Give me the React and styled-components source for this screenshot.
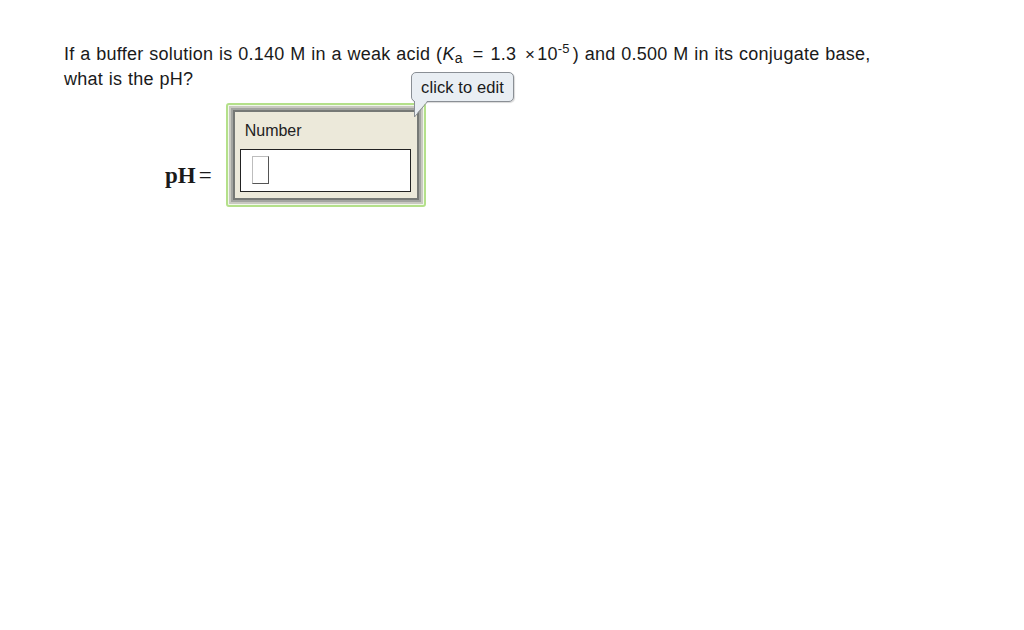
import React from 'react'
import styled, { createGlobalStyle } from 'styled-components'

const GlobalStyle = createGlobalStyle`
  body {
    margin: 0;
    background: #ffffff;
    font-family: "Liberation Sans", Arial, sans-serif;
  }
`

const App = () => {
  return (
    <Page>
      <GlobalStyle />
      <Question>
        If a buffer solution is 0.140 M in a weak acid (<Italic>K</Italic><Sub>a</Sub><Op>=</Op>1.3 <Times>×</Times>10<Sup>-5</Sup>) and 0.500 M in its conjugate base,
        <br />
        what is the pH?
      </Question>

      <AnswerRow>
        <AnswerLabel>pH<Equals>=</Equals></AnswerLabel>
        <GreenFrame>
          <GrayFrame>
            <Panel>
              <PanelTitle>Number</PanelTitle>
              <InputBox>
                <Cursor />
              </InputBox>
            </Panel>
          </GrayFrame>
        </GreenFrame>
      </AnswerRow>

      <Bubble>
        click to edit
        <BubbleTail viewBox="0 0 18 18" width="18" height="18">
          <path d="M2 -1 L16 -1 L2 16 Z" fill="#e9eef3" />
          <path d="M2.5 0 L2.5 16 L16 0" stroke="#8a8f95" strokeWidth="1" fill="none" />
        </BubbleTail>
      </Bubble>
    </Page>
  )
}

const Page = styled.div`
  position: relative;
  width: 1024px;
  height: 630px;
  padding: 42px 0 0 64px;
  box-sizing: border-box;
`
const Question = styled.p`
  margin: 0;
  font-size: 18px;
  line-height: 24px;
  color: #1a1a1a;
  letter-spacing: 0.25px;
  word-spacing: 0.5px;
`
const Italic = styled.i`
  font-style: italic;
`
const Sub = styled.sub`
  font-size: 14px;
  vertical-align: -3px;
  line-height: 0;
  margin-right: 3px;
`
const Op = styled.span`
  margin: 0 7px;
`
const Sup = styled.sup`
  font-size: 13px;
  vertical-align: 7px;
  line-height: 0;
  margin-right: 3px;
`
const Times = styled.span`
  font-size: 17px;
  margin: 0 2px 0 3px;
`
const AnswerRow = styled.div`
  display: flex;
  align-items: flex-end;
  margin-top: 12px;
  margin-left: 101px;
  gap: 14px;
`
const AnswerLabel = styled.div`
  font-family: "Liberation Serif", "Times New Roman", serif;
  font-weight: bold;
  font-size: 23px;
  line-height: 26px;
  color: #1a1a1a;
  margin-bottom: 18px;
`
const Equals = styled.span`
  font-weight: normal;
  margin-left: 3px;
`
const GreenFrame = styled.div`
  border: 2px solid #b4e08a;
  border-radius: 3px;
  padding: 1px;
  background: #ffffff;
  box-shadow: inset 0 0 0 1px #f1f8ea;
`
const GrayFrame = styled.div`
  border: 2px solid #c9c9c1;
  background: #a2a4a0;
  padding: 2px;
`
const Panel = styled.div`
  width: 186px;
  height: 90px;
  box-sizing: border-box;
  background: #ece9da;
  border: 2px solid #767976;
  padding: 0 6px 0 5px;
`
const PanelTitle = styled.div`
  font-size: 16px;
  color: #222;
  padding-left: 5px;
  height: 37px;
  line-height: 38px;
`
const InputBox = styled.div`
  height: 43px;
  background: #ffffff;
  border: 1px solid #222;
  box-sizing: border-box;
  padding: 6px 0 0 11px;
`
const Cursor = styled.div`
  width: 17px;
  height: 28px;
  box-sizing: border-box;
  border: 1px solid #bdbdbd;
  border-right-color: #555;
  border-bottom-color: #555;
  background: #fff;
`
const Bubble = styled.div`
  position: absolute;
  left: 411px;
  top: 72px;
  width: 103px;
  height: 30px;
  box-sizing: border-box;
  border: 1px solid #8a8f95;
  border-radius: 5px;
  background: #e9eef3;
  box-shadow: 1px 1px 1px rgba(0,0,0,0.15);
  font-size: 16.5px;
  letter-spacing: 0.1px;
  color: #1a1a1a;
  text-align: center;
  line-height: 28px;
`
const BubbleTail = styled.svg`
  position: absolute;
  left: 0px;
  top: 28px;
  overflow: visible;
`

export default App
